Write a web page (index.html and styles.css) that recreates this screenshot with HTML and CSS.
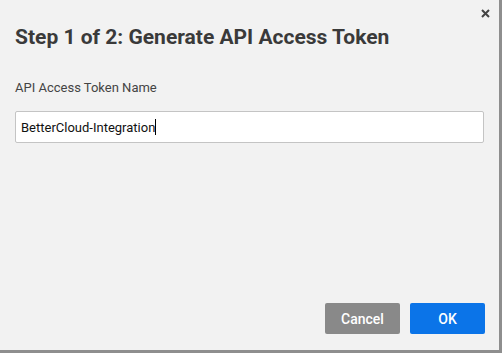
FILE: index.html
```html
<!DOCTYPE html>
<html>
<head>
<meta charset="utf-8">
<link rel="stylesheet" href="styles.css">
</head>
<body>
<div class="dialog">
  <button class="close" aria-label="Close">
    <svg width="9" height="9" viewBox="0 0 9 9"><path d="M1 1L8 8M8 1L1 8" stroke="#444" stroke-width="2"/></svg>
  </button>
  <h1 class="title">Step 1 of 2: Generate API Access Token</h1>
  <label class="label">API Access Token Name</label>
  <div class="input"><span>BetterCloud-Integration</span><span class="caret"></span></div>
  <div class="spacer"></div>
  <div class="actions">
    <button class="btn cancel">Cancel</button>
    <button class="btn ok">OK</button>
  </div>
</div>
</body>
</html>
```
FILE: styles.css
```css
html, body { margin: 0; padding: 0; }
body {
  background: #8e8e8e;
  width: 502px;
  height: 353px;
  overflow: hidden;
  font-family: Roboto, "Liberation Sans", sans-serif;
}
.dialog {
  position: relative;
  width: 499px;
  height: 350px;
  background: #f2f2f2;
  box-sizing: border-box;
  padding: 0 14px 16px 15px;
  display: flex;
  flex-direction: column;
}
.close {
  position: absolute;
  top: 9px;
  right: 9px;
  border: 0;
  background: none;
  padding: 0;
  width: 9px;
  height: 9px;
  display: flex;
}
.title {
  margin: 25px 0 0 0;
  font-size: 21px;
  font-weight: 700;
  color: #3a3a3a;
  line-height: 24px;
}
.label {
  margin-top: 31px;
  font-size: 13px;
  color: #444;
  line-height: 16px;
}
.input {
  margin-top: 15px;
  margin-right: 1px;
  height: 32px;
  box-sizing: border-box;
  background: #fff;
  border: 1px solid #c4c4c4;
  border-radius: 2px;
  display: flex;
  align-items: center;
  padding-left: 5px;
  font-size: 13px;
  color: #111;
}
.caret {
  width: 1px;
  height: 16px;
  background: #000;
}
.spacer { flex: 1; }
.actions {
  display: flex;
  justify-content: flex-end;
  gap: 10px;
}
.btn {
  width: 75px;
  height: 31px;
  border: 0;
  border-radius: 2px;
  color: #fff;
  font-family: Roboto, "Liberation Sans", sans-serif;
  font-size: 14px;
  font-weight: 500;
}
.cancel { background: #898989; }
.ok { background: #0b74e8; }
```
